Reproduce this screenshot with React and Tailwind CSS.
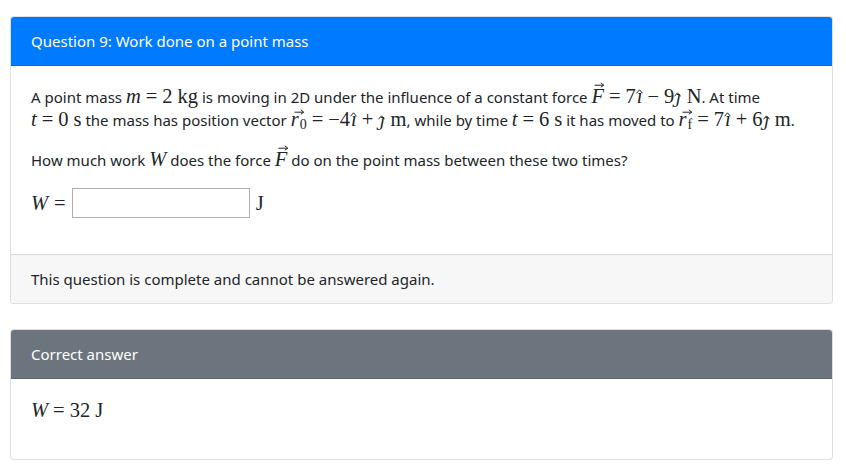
import React from "react";

const M = ({ children, className = "" }) => (
  <span className={`font-['Liberation_Serif','DejaVu_Serif',serif] text-[20.5px] leading-none whitespace-nowrap ${className}`}>
    {children}
  </span>
);

const I = ({ children }) => <span className="italic">{children}</span>;
const Eq = () => <span className="mx-[5px]">=</span>;
const Op = ({ c }) => <span className="mx-[5px]">{c}</span>;
const Sp = () => <span className="inline-block w-[5px]" />;

function Arrow({ top }) {
  return (
    <svg className={`absolute left-[3px] ${top}`} width="11" height="7" viewBox="0 0 11 7">
      <path d="M0.5 4.2 H9.2" stroke="#212529" strokeWidth="1" fill="none" />
      <path d="M6.8 1.8 L9.8 4.2 L6.8 6.2" stroke="#212529" strokeWidth="1" fill="none" />
    </svg>
  );
}

function Caret() {
  return (
    <svg className="absolute top-[3px] left-[0px]" width="7" height="5" viewBox="0 0 7 5">
      <path d="M0.5 4.3 L3.5 0.8 L6.5 4.3" stroke="#212529" strokeWidth="1" fill="none" />
    </svg>
  );
}

function Vec({ children, sub }) {
  return (
    <span className="inline-block">
      <span className="relative inline-block italic">
        {children}
        <Arrow top={sub ? "-top-[1px]" : "-top-[5px]"} />
      </span>
      {sub && <span className="text-[14px] align-[-3px] ml-[1px]">{sub}</span>}
    </span>
  );
}

const Hi = () => (
  <span className="relative inline-block italic pl-[1px]">
    ı
    <Caret />
  </span>
);
const Hj = () => (
  <span className="relative inline-block italic px-[1px] font-['DejaVu_Serif',serif] text-[17px]">
    ȷ
    <Caret />
  </span>
);

function Card({ title, headerClass, children, footer }) {
  return (
    <div className="rounded border border-[rgba(0,0,0,0.125)] bg-white overflow-hidden">
      <div className={`px-5 py-3 text-white border-b border-[rgba(0,0,0,0.125)] ${headerClass}`}>{title}</div>
      <div className="p-5">{children}</div>
      {footer && (
        <div className="px-5 py-3 bg-[#f7f7f7] border-t border-[rgba(0,0,0,0.125)]">{footer}</div>
      )}
    </div>
  );
}

export default function App() {
  return (
    <div className="bg-white min-h-screen pt-4 pl-[10px] pr-[13px] text-[#212529] text-[15px] leading-6 font-['Noto_Sans','Open_Sans',sans-serif]">
      <Card
        title="Question 9: Work done on a point mass"
        headerClass="bg-[#007bff]"
        footer="This question is complete and cannot be answered again."
      >
        <p className="mb-4 leading-[23px] whitespace-nowrap">
          A point mass <M><I>m</I><Eq />2<Sp />kg</M> is moving in 2D under the influence of a constant force{" "}
          <M><Vec>F</Vec><Eq />7<Hi /><Op c="−" />9<Hj /><Sp />N</M>. At time
          <br />
          <M><I>t</I><Eq />0<Sp />s</M> the mass has position vector{" "}
          <M><Vec sub="0">r</Vec><Eq />−4<Hi /><Op c="+" /><Hj /><Sp />m</M>, while by time <M><I>t</I><Eq />6<Sp />s</M> it has moved to{" "}
          <M><Vec sub="f">r</Vec><Eq />7<Hi /><Op c="+" />6<Hj /><Sp />m</M>.
        </p>
        <p className="mb-4">
          How much work <M><I>W</I></M> does the force <M><Vec>F</Vec></M> do on the point mass between these two times?
        </p>
        <div className="mb-4 flex items-center h-[30px]">
          <M className="mr-[6px]"><I>W</I><span className="ml-[6px]">=</span></M>
          <div className="w-[178px] h-[30px] border border-[#b0b0b0]" />
          <M className="ml-[6px]">J</M>
        </div>
      </Card>
      <div className="h-[25px]" />
      <Card title="Correct answer" headerClass="bg-[#6c757d]">
        <p className="mb-4">
          <M><I>W</I><Eq />32<Sp />J</M>
        </p>
      </Card>
    </div>
  );
}
